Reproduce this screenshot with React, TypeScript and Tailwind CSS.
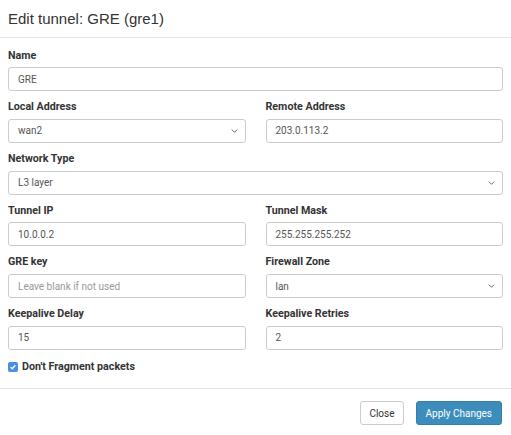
import React from "react";

function Chevron() {
  return (
    <svg
      className="absolute right-[7px] top-1/2 -translate-y-1/2 w-[7px] h-[4px] text-[#666]"
      viewBox="0 0 7 4"
      fill="none"
      stroke="currentColor"
      strokeWidth="1"
      aria-hidden
    >
      <path d="M0.8 0.6l2.7 2.7 2.7-2.7" />
    </svg>
  );
}

function Field({
  label,
  value,
  placeholder,
  select,
}: {
  label: string;
  value?: string;
  placeholder?: string;
  select?: boolean;
}) {
  return (
    <div className="mb-[8px]">
      <div className="text-[10.7px] leading-[15.7px] font-bold text-[#333] mb-[4px]">{label}</div>
      <div className="relative h-[24px] border border-[#ccc] rounded-[3px] bg-white flex items-center px-[9px] text-[10px]">
        {value ? (
          <span className="text-[#555]">{value}</span>
        ) : (
          <span className="text-[#999]">{placeholder}</span>
        )}
        {select && <Chevron />}
      </div>
    </div>
  );
}

export default function App() {
  return (
    <div className="w-[511px] h-[435px] bg-white font-['Roboto',_'Liberation_Sans',_sans-serif] text-[#333]">
      <div className="h-[38px] border-b border-[#e5e5e5] flex items-center px-[8px]">
        <h4 className="font-['Liberation_Sans',_Arial,_sans-serif] text-[15px] text-[#333] pt-[1px]">
          Edit tunnel: GRE (gre1)
        </h4>
      </div>
      <div className="px-[8px] pt-[9.5px] h-[351px] border-b border-[#e5e5e5]">
        <Field label="Name" value="GRE" />
        <div className="grid grid-cols-2 gap-x-[20px]">
          <Field label="Local Address" value="wan2" select />
          <Field label="Remote Address" value="203.0.113.2" />
        </div>
        <Field label="Network Type" value="L3 layer" select />
        <div className="grid grid-cols-2 gap-x-[20px]">
          <Field label="Tunnel IP" value="10.0.0.2" />
          <Field label="Tunnel Mask" value="255.255.255.252" />
          <Field label="GRE key" placeholder="Leave blank if not used" />
          <Field label="Firewall Zone" value="lan" select />
          <Field label="Keepalive Delay" value="15" />
          <Field label="Keepalive Retries" value="2" />
        </div>
        <label className="flex items-center gap-[4px] mt-[1px] text-[10.7px] font-bold text-[#333]">
          <span className="w-[10px] h-[10px] rounded-[2px] bg-[#4a90e2] flex items-center justify-center">
            <svg viewBox="0 0 10 10" className="w-[8px] h-[8px]" fill="none" stroke="white" strokeWidth="1.6" aria-hidden>
              <path d="M2 5.2l2 2 4-4.4" />
            </svg>
          </span>
          Don't Fragment packets
        </label>
      </div>
      <div className="flex justify-end items-center gap-[12px] px-[9px] pt-[12px]">
        <button className="h-[24px] px-[8px] border border-[#ccc] rounded-[3px] bg-white text-[10px] text-[#333]">
          Close
        </button>
        <button className="h-[24px] px-[9px] border border-[#367fa9] rounded-[3px] bg-[#3c8dbc] text-[10px] text-white">
          Apply Changes
        </button>
      </div>
    </div>
  );
}
